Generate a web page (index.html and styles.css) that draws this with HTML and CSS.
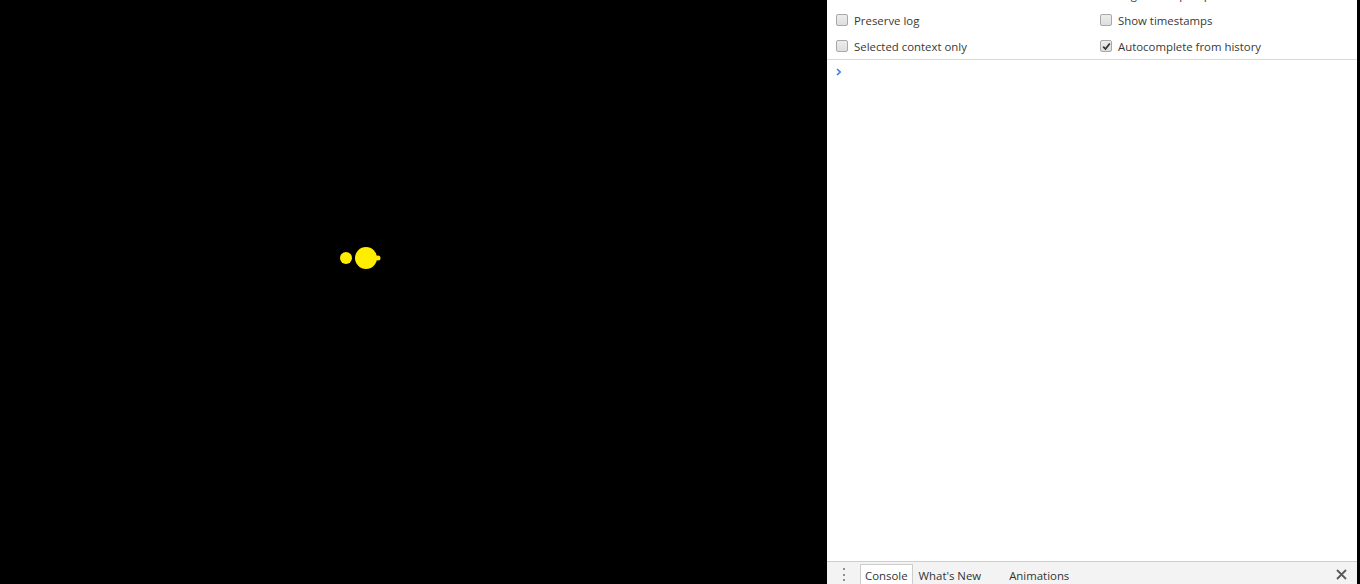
FILE: index.html
```html
<!DOCTYPE html>
<html>
<head>
<meta charset="utf-8">
<link rel="stylesheet" href="styles.css">
</head>
<body>
<div class="stage">
  <svg class="orbit" width="60" height="40" viewBox="0 0 60 40">
    <circle cx="16" cy="18" r="6" fill="#ffee00"/>
    <circle cx="36" cy="18" r="11" fill="#ffee00"/>
    <circle cx="48" cy="18" r="2.5" fill="#ffee00"/>
  </svg>
</div>
<div class="devtools">
  <div class="settings">
    <label class="opt"><span class="box"></span><span>Hide network</span></label>
    <label class="opt"><span class="box"></span><span>Log XMLHttpRequests</span></label>
    <label class="opt"><span class="box"></span><span>Preserve log</span></label>
    <label class="opt"><span class="box"></span><span>Show timestamps</span></label>
    <label class="opt"><span class="box"></span><span>Selected context only</span></label>
    <label class="opt"><span class="box checked"><svg width="9" height="9" viewBox="0 0 9 9"><path d="M1.2 4.6 L3.5 7 L7.8 1.5" fill="none" stroke="#333" stroke-width="1.8"/></svg></span><span>Autocomplete from history</span></label>
  </div>
  <div class="console">
    <div class="prompt"><svg width="6" height="8" viewBox="0 0 6 8"><path d="M1 1 L4.2 4 L1 7" fill="none" stroke="#367cf1" stroke-width="1.6"/></svg></div>
  </div>
  <div class="drawer">
    <div class="menu"><span></span><span></span><span></span></div>
    <div class="tab active">Console</div>
    <div class="tab">What's New</div>
    <div class="tab">Animations</div>
    <div class="spacer"></div>
    <div class="close"><svg width="11" height="11" viewBox="0 0 11 11"><path d="M1 1 L10 10 M10 1 L1 10" stroke="#5a5a5a" stroke-width="1.8"/></svg></div>
  </div>
</div>
</body>
</html>
```

FILE: styles.css
```css
html, body {
  margin: 0;
  padding: 0;
  height: 100%;
}
body {
  background: #000;
  display: flex;
  overflow: hidden;
  font-family: "Segoe UI", "Open Sans", "Liberation Sans", sans-serif;
}
.stage {
  flex: 0 0 827px;
  height: 584px;
  position: relative;
}
.orbit {
  position: absolute;
  left: 330px;
  top: 240px;
}
.devtools {
  flex: 0 0 530px;
  height: 584px;
  background: #fff;
  display: flex;
  flex-direction: column;
  overflow: hidden;
}
.settings {
  display: grid;
  grid-template-columns: 264px 1fr;
  grid-auto-rows: 26px;
  margin-top: -19px;
  padding-left: 9px;
  border-bottom: 1px solid #dadada;
}
.opt {
  display: flex;
  align-items: center;
  gap: 6px;
  font-size: 11.4px;
  color: #383838;
  white-space: nowrap;
}
.box {
  width: 10px;
  height: 10px;
  border: 1px solid #a9a9a9;
  border-radius: 2px;
  background: linear-gradient(#ededed, #dedede);
  display: flex;
  align-items: center;
  justify-content: center;
  flex: none;
}
.console {
  flex: 1;
  padding: 7px 0 0 9px;
}
.prompt {
  height: 10px;
  display: flex;
  align-items: center;
}
.drawer {
  flex: 0 0 22px;
  background: #f3f3f3;
  border-top: 1px solid #cdcdcd;
  display: flex;
  align-items: flex-end;
  font-size: 11.4px;
  color: #333;
}
.menu {
  width: 33px;
  align-self: stretch;
  display: flex;
  flex-direction: column;
  align-items: center;
  justify-content: flex-start;
  gap: 3.5px;
  padding-top: 6px;
  box-sizing: border-box;
}
.menu span {
  width: 2px;
  height: 2px;
  background: #6e6e6e;
  border-radius: 1px;
}
.tab {
  height: 19px;
  line-height: 22px;
  padding: 0 5px 0 6px;
  white-space: nowrap;
}
.tab.active {
  background: #fff;
  border: 1px solid #cdcdcd;
  border-bottom: none;
  padding: 0 4px;
}
.tab + .tab {
  margin-right: 17px;
}
.spacer {
  flex: 1;
}
.close {
  width: 21px;
  height: 19px;
  display: flex;
  align-items: center;
  justify-content: flex-start;
  padding-top: 3px;
}
```
